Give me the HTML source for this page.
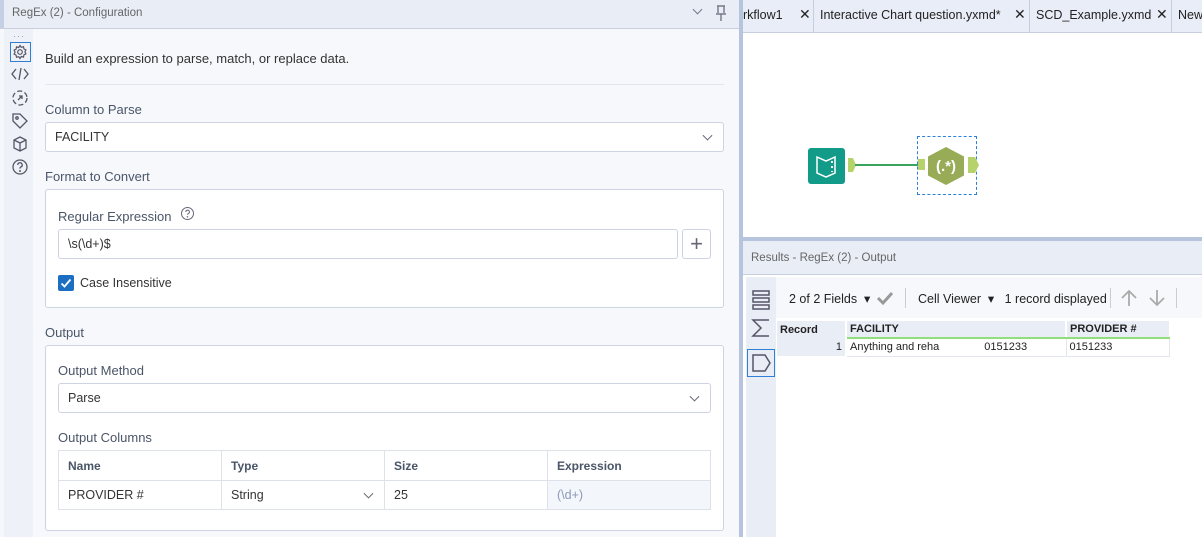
<!DOCTYPE html>
<html><head><style>
*{box-sizing:border-box;margin:0;padding:0}
body{width:1202px;height:537px;overflow:hidden;background:#fff;font-family:"Liberation Sans",sans-serif;position:relative;color:#333}
.abs{position:absolute}
.lbl{font-size:13px;color:#4a5568}
.inp{background:#fff;border:1px solid #cdd3e0;border-radius:3px;font-size:12.5px;color:#333;padding-left:9px;display:flex;align-items:center}
.chev{position:absolute;right:12px;top:50%;width:7px;height:7px;border-right:1.3px solid #667;border-bottom:1.3px solid #667;transform:translateY(-70%) rotate(45deg)}
.card{background:#fff;border:1px solid #cdd3e0;border-radius:3px}
table{border-collapse:collapse}
</style></head><body>
<div class="abs" style="left:0;top:0;width:739px;height:537px;background:#f6f8fc"></div>
<div class="abs" style="left:0;top:0;width:739px;height:29px;background:#e9edf6;border-bottom:1px solid #c9d0dc;border-left:4px solid #c6d0e4"></div>
<div class="abs" style="left:12px;top:7px;font-size:11.5px;color:#666">RegEx (2) - Configuration</div>
<div class="abs" style="left:694px;top:6px;width:7px;height:7px;border-right:1.3px solid #778;border-bottom:1.3px solid #778;transform:rotate(45deg)"></div>
<svg class="abs" style="left:713px;top:4px" width="16" height="18" viewBox="0 0 16 18"><path d="M4 2h8M5 2v7M11 2v7M3 10h10M8 10v7" stroke="#778" stroke-width="1.4" fill="none"/></svg>
<div class="abs" style="left:4px;top:29px;width:29px;height:508px;background:#eef1f7"></div>
<div class="abs" style="left:13px;top:31px;font-size:9px;color:#999;letter-spacing:1px">···</div>
<div class="abs" style="left:10px;top:42px;width:21px;height:20px;border:1px solid #2f7fd1"></div>
<svg class="abs" style="left:12px;top:44px" width="16" height="16" viewBox="0 0 16 16" fill="none" stroke="#556" stroke-width="1.2"><circle cx="8" cy="8" r="2.3"/><path d="M8 1.5l1.3 1.8 2.2-.6.4 2.2 2 1-1 2 1 2-2 1-.4 2.2-2.2-.6L8 14.5l-1.3-1.8-2.2.6-.4-2.2-2-1 1-2-1-2 2-1 .4-2.2 2.2.6z"/></svg>
<svg class="abs" style="left:11px;top:66px" width="18" height="16" viewBox="0 0 18 16" fill="none" stroke="#556" stroke-width="1.3"><path d="M5 3L1 8l4 5M13 3l4 5-4 5M10 2L8 14"/></svg>
<svg class="abs" style="left:11px;top:89px" width="18" height="18" viewBox="0 0 18 18" fill="none" stroke="#556" stroke-width="1.3"><circle cx="9" cy="9" r="7" stroke-dasharray="5 2.5"/><path d="M7 11l4-4M8 7h3v3"/></svg>
<svg class="abs" style="left:11px;top:112px" width="18" height="18" viewBox="0 0 18 18" fill="none" stroke="#556" stroke-width="1.3"><path d="M2 2h7l7 7-7 7-7-7z"/><circle cx="6" cy="6" r="1.2"/></svg>
<svg class="abs" style="left:11px;top:135px" width="18" height="18" viewBox="0 0 18 18" fill="none" stroke="#556" stroke-width="1.3"><path d="M9 2l6 3v8l-6 3-6-3V5zM3 5l6 3 6-3M9 8v8"/></svg>
<svg class="abs" style="left:11px;top:158px" width="18" height="18" viewBox="0 0 18 18" fill="none" stroke="#556" stroke-width="1.3"><circle cx="9" cy="9" r="7"/><path d="M6.8 7a2.2 2.2 0 1 1 3 2c-.7.3-.8.8-.8 1.6"/><circle cx="9" cy="13" r=".4"/></svg>

<div class="abs" style="left:45px;top:51px;font-size:13px;color:#333">Build an expression to parse, match, or replace data.</div>
<div class="abs" style="left:45px;top:84px;width:679px;height:1px;background:#e2e6ee"></div>
<div class="abs lbl" style="left:45px;top:102px">Column to Parse</div>
<div class="abs inp" style="left:45px;top:122px;width:679px;height:30px">FACILITY<span class="chev"></span></div>
<div class="abs lbl" style="left:45px;top:169px">Format to Convert</div>
<div class="abs card" style="left:45px;top:189px;width:679px;height:119px"></div>
<div class="abs lbl" style="left:58px;top:209px">Regular Expression</div>
<svg class="abs" style="left:180px;top:206px" width="15" height="15" viewBox="0 0 15 15" fill="none" stroke="#667" stroke-width="1"><circle cx="7.5" cy="7.5" r="6"/><path d="M5.8 6a1.8 1.8 0 1 1 2.5 1.6c-.5.2-.8.6-.8 1.2"/><circle cx="7.5" cy="10.8" r=".3"/></svg>
<div class="abs inp" style="left:58px;top:229px;width:620px;height:30px">\s(\d+)$</div>
<div class="abs inp" style="left:682px;top:229px;width:29px;height:30px;padding:0;justify-content:center;font-size:22px;color:#667;font-weight:300">+</div>
<div class="abs" style="left:58px;top:275px;width:16px;height:16px;background:#1b6ec2;border-radius:2px"></div>
<svg class="abs" style="left:58px;top:275px" width="16" height="16"><path d="M3.5 8.5l3 3 6-7" stroke="#fff" stroke-width="1.8" fill="none"/></svg>
<div class="abs" style="left:80px;top:276px;font-size:12.5px;color:#333">Case Insensitive</div>
<div class="abs lbl" style="left:45px;top:325px">Output</div>
<div class="abs card" style="left:45px;top:345px;width:679px;height:186px"></div>
<div class="abs lbl" style="left:58px;top:363px">Output Method</div>
<div class="abs inp" style="left:58px;top:383px;width:653px;height:30px">Parse<span class="chev"></span></div>
<div class="abs lbl" style="left:58px;top:430px">Output Columns</div>
<table class="abs" style="left:58px;top:450px;width:653px;font-size:12.5px">
<tr style="height:30px;background:#fff"><td style="border:1px solid #dde2ea;width:163px;padding-left:9px;color:#4a5568;font-weight:bold;font-size:12px">Name</td><td style="border:1px solid #dde2ea;width:163px;padding-left:9px;color:#4a5568;font-weight:bold;font-size:12px">Type</td><td style="border:1px solid #dde2ea;width:163px;padding-left:9px;color:#4a5568;font-weight:bold;font-size:12px">Size</td><td style="border:1px solid #dde2ea;padding-left:9px;color:#4a5568;font-weight:bold;font-size:12px">Expression</td></tr>
<tr style="height:29px;background:#fff"><td style="border:1px solid #dde2ea;padding-left:9px">PROVIDER #</td><td style="border:1px solid #dde2ea;padding-left:9px;position:relative">String<span class="chev"></span></td><td style="border:1px solid #dde2ea;padding-left:9px">25</td><td style="border:1px solid #dde2ea;padding-left:9px;background:#f3f6fb;color:#8a9ab8">(\d+)</td></tr>
</table>
<div class="abs" style="left:739px;top:0;width:4px;height:537px;background:#b7c4dd"></div>
<div class="abs" style="left:743px;top:0;width:459px;height:33px;background:#e9edf7;border-bottom:1px solid #c6cfdf"></div>
<div class="abs" style="left:743px;top:8px;font-size:12.5px;color:#222">rkflow1</div>
<div class="abs" style="left:799px;top:6px;font-size:14px;color:#222">✕</div>
<div class="abs" style="left:813px;top:0;width:1px;height:33px;background:#c6cfdf"></div>
<div class="abs" style="left:820px;top:8px;font-size:12.5px;color:#222">Interactive Chart question.yxmd*</div>
<div class="abs" style="left:1014px;top:6px;font-size:14px;color:#222">✕</div>
<div class="abs" style="left:1029px;top:0;width:1px;height:33px;background:#c6cfdf"></div>
<div class="abs" style="left:1036px;top:8px;font-size:12.5px;color:#222">SCD_Example.yxmd</div>
<div class="abs" style="left:1156px;top:6px;font-size:14px;color:#222">✕</div>
<div class="abs" style="left:1171px;top:0;width:1px;height:33px;background:#c6cfdf"></div>
<div class="abs" style="left:1178px;top:8px;font-size:12.5px;color:#222">New</div>
<div class="abs" style="left:808px;top:148px;width:37px;height:36px;background:#139b8a;border-radius:3px"></div>
<svg class="abs" style="left:808px;top:148px" width="37" height="36"><path d="M9 9v16l9 4 9-4V9l-9 4z" fill="none" stroke="#fff" stroke-width="1.5"/><path d="M24 13v2M24 18v2M24 23v1" stroke="#fff" stroke-width="2"/></svg>
<svg class="abs" style="left:848px;top:158px" width="8" height="14"><path d="M0 0h5l3 7-3 7H0z" fill="#b5d36a"/></svg>
<div class="abs" style="left:855px;top:164px;width:63px;height:2px;background:#3aa35c"></div>
<div class="abs" style="left:917px;top:136px;width:60px;height:59px;border:1px dashed #2e7fd6"></div>
<div class="abs" style="left:918px;top:159px;width:7px;height:11px;background:#b5d36a"></div>
<svg class="abs" style="left:926px;top:146px" width="40" height="40"><polygon points="20,1 38,10.5 38,29.5 20,39 2,29.5 2,10.5" fill="#98ac58"/><text x="20" y="25" font-family="Liberation Sans" font-size="15" font-weight="bold" fill="#fff" text-anchor="middle">(.*)</text></svg>
<svg class="abs" style="left:968px;top:157px" width="12" height="16"><path d="M0 0h7l4 8-4 8H0z" fill="#b5d36a"/></svg>
<div class="abs" style="left:743px;top:237px;width:459px;height:4px;background:#b7c4dd"></div>
<div class="abs" style="left:743px;top:241px;width:459px;height:34px;background:#e9edf6;border-bottom:1px solid #c6cfdf"></div>
<div class="abs" style="left:751px;top:252px;font-size:11.5px;color:#666">Results - RegEx (2) - Output</div>
<div class="abs" style="left:743px;top:275px;width:459px;height:262px;background:#fff"></div>
<div class="abs" style="left:746px;top:277px;width:30px;height:260px;background:#e9edf6"></div>
<div class="abs" style="left:776px;top:277px;width:426px;height:41px;background:#f6f8fc"></div>
<svg class="abs" style="left:751px;top:289px" width="20" height="22" fill="none" stroke="#556" stroke-width="1.5"><rect x="2" y="2" width="16" height="4"/><rect x="2" y="9" width="16" height="4"/><rect x="2" y="16" width="16" height="4"/></svg>
<svg class="abs" style="left:751px;top:318px" width="20" height="20" fill="none" stroke="#556" stroke-width="1.5"><path d="M18 2H2l8 8-8 8h16"/></svg>
<div class="abs" style="left:747px;top:349px;width:28px;height:28px;border:1px solid #2e7fd6"></div>
<svg class="abs" style="left:751px;top:353px" width="22" height="20" fill="none" stroke="#556" stroke-width="1.5"><path d="M2 2h12l5 8-5 8H2z"/></svg>
<div class="abs" style="left:789px;top:291px;font-size:12.5px;color:#222">2 of 2 Fields &nbsp;▾</div>
<svg class="abs" style="left:876px;top:290px" width="18" height="16"><path d="M2 8l5 5 9-10" stroke="#999" stroke-width="3" fill="none"/></svg>
<div class="abs" style="left:905px;top:288px;width:1px;height:20px;background:#ccc"></div>
<div class="abs" style="left:918px;top:291px;font-size:12.5px;color:#222">Cell Viewer &nbsp;▾ &nbsp;&nbsp;1 record displayed</div>
<div class="abs" style="left:1110px;top:288px;width:1px;height:20px;background:#ccc"></div>
<svg class="abs" style="left:1120px;top:289px" width="52" height="18" fill="none" stroke="#aaa" stroke-width="1.8"><path d="M9 17V2M2 9l7-7 7 7M37 1v15M30 9l7 7 7-7"/></svg>
<div class="abs" style="left:1176px;top:288px;width:1px;height:20px;background:#ccc"></div>
<table class="abs" style="left:777px;top:321px;font-size:11px;color:#222">
<tr style="height:17px;background:#e9edf6;font-weight:bold"><td style="width:69px;padding-left:3px;border-right:2px solid #fff">Record</td><td style="width:220px;padding-left:3px;border-right:2px solid #fff;border-bottom:2px solid #8fe07a">FACILITY</td><td style="width:103px;padding-left:3px;border-bottom:2px solid #8fe07a">PROVIDER #</td></tr>
<tr style="height:18px"><td style="background:#e9edf6;text-align:right;padding-right:3px;border-right:2px solid #fff">1</td><td style="padding-left:3px;border:1px solid #e3e6ec">Anything and reha<span style="margin-left:45px">0151233</span></td><td style="padding-left:3px;border:1px solid #e3e6ec">0151233</td></tr>
</table>
</body></html>
